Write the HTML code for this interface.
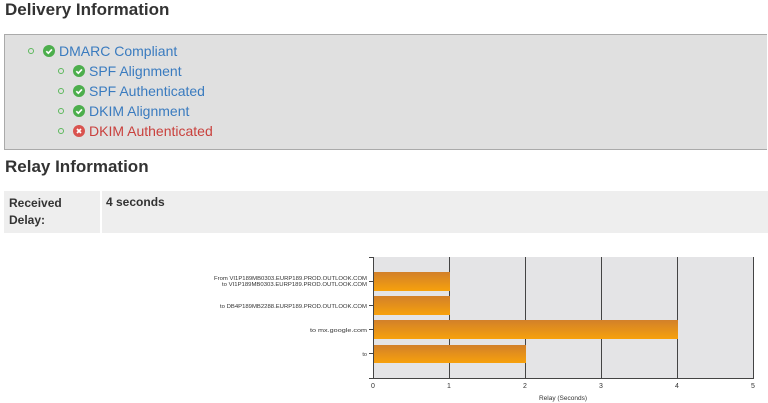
<!DOCTYPE html>
<html><head><style>
body{margin:0;width:768px;height:403px;overflow:hidden;background:#fff;font-family:"Liberation Sans",Arial,sans-serif;position:relative}
h2{position:absolute;left:5px;margin:0;font-size:17px;font-weight:bold;color:#333}
.box{position:absolute;left:4px;top:34px;width:762px;height:114px;background:#e0e0e0;border:1px solid #aaa;border-right:none}
.it{position:absolute;font-size:14px;color:#3a7bbf;height:20px;line-height:20px}
.it .b{position:absolute;left:-15px;top:7px;width:4px;height:4px;border:1px solid #5cb85c;border-radius:50%}
.ic{display:inline-block;width:12px;height:12px;border-radius:50%;background:#4cae4c;vertical-align:-1px;margin-right:4px;position:relative}
.ic.r{background:#d9534f}
.tbl{position:absolute;left:4px;top:191px;width:764px;height:42px;background:#eee;font-size:12px;font-weight:bold;color:#333}
</style></head><body>
<h2 style="top:0">Delivery Information</h2>
<div class="box"></div>
<div class="it" style="left:43px;top:41px"><span class="b"></span><span class="ic"><svg width="12" height="12" style="position:absolute;left:0;top:0"><path d="M3.3 6.2l2 2 3.6-3.8" stroke="#fff" stroke-width="1.7" fill="none"/></svg></span>DMARC Compliant</div>
<div class="it" style="left:73px;top:61px"><span class="b"></span><span class="ic"><svg width="12" height="12" style="position:absolute;left:0;top:0"><path d="M3.3 6.2l2 2 3.6-3.8" stroke="#fff" stroke-width="1.7" fill="none"/></svg></span>SPF Alignment</div>
<div class="it" style="left:73px;top:81px"><span class="b"></span><span class="ic"><svg width="12" height="12" style="position:absolute;left:0;top:0"><path d="M3.3 6.2l2 2 3.6-3.8" stroke="#fff" stroke-width="1.7" fill="none"/></svg></span>SPF Authenticated</div>
<div class="it" style="left:73px;top:101px"><span class="b"></span><span class="ic"><svg width="12" height="12" style="position:absolute;left:0;top:0"><path d="M3.3 6.2l2 2 3.6-3.8" stroke="#fff" stroke-width="1.7" fill="none"/></svg></span>DKIM Alignment</div>
<div class="it" style="left:73px;top:121px;color:#c9413d"><span class="b"></span><span class="ic r"><svg width="12" height="12" style="position:absolute;left:0;top:0"><path d="M4 4l4 4M8 4l-4 4" stroke="#fff" stroke-width="1.7"/></svg></span>DKIM Authenticated</div>
<h2 style="top:157px">Relay Information</h2>
<div class="tbl">
<div style="position:absolute;left:0;top:0;width:96px;height:42px;border-right:2px solid #fff"></div>
<div style="position:absolute;left:5px;top:4px;line-height:17px">Received<br>Delay:</div>
<div style="position:absolute;left:102px;top:4px">4 seconds</div>
</div>
<svg style="position:absolute;left:0;top:0" width="768" height="403">
<defs><linearGradient id="g" x1="0" y1="0" x2="0" y2="1"><stop offset="0" stop-color="#d2802a"/><stop offset="1" stop-color="#f7a10c"/></linearGradient></defs>
<rect x="373" y="257" width="380" height="121" fill="#e4e4e6"/>
<g stroke="#444" stroke-width="1">
<line x1="449.5" y1="257" x2="449.5" y2="378"/><line x1="525.5" y1="257" x2="525.5" y2="378"/><line x1="601.5" y1="257" x2="601.5" y2="378"/><line x1="677.5" y1="257" x2="677.5" y2="378"/><line x1="753.5" y1="257" x2="753.5" y2="378"/>
<line x1="373.5" y1="257" x2="373.5" y2="379"/><line x1="373" y1="378.5" x2="754" y2="378.5"/>
<line x1="369" y1="257.5" x2="373" y2="257.5"/><line x1="369" y1="281.5" x2="373" y2="281.5"/><line x1="369" y1="305.5" x2="373" y2="305.5"/><line x1="369" y1="329.5" x2="373" y2="329.5"/><line x1="369" y1="353.5" x2="373" y2="353.5"/><line x1="369" y1="378.5" x2="373" y2="378.5"/>
</g>
<rect x="374" y="272" width="76" height="19" fill="url(#g)"/>
<rect x="374" y="296" width="76" height="19" fill="url(#g)"/>
<rect x="374" y="320" width="304" height="19" fill="url(#g)"/>
<rect x="374" y="345" width="152" height="18" fill="url(#g)"/>
<g font-size="5.5" fill="#333" text-anchor="end" font-family="Liberation Sans,sans-serif">
<text x="367" y="280" textLength="153" lengthAdjust="spacingAndGlyphs">From VI1P189MB0303.EURP189.PROD.OUTLOOK.COM</text>
<text x="367" y="286" textLength="145" lengthAdjust="spacingAndGlyphs">to VI1P189MB0303.EURP189.PROD.OUTLOOK.COM</text>
<text x="367" y="308" textLength="147" lengthAdjust="spacingAndGlyphs">to DB4P189MB2288.EURP189.PROD.OUTLOOK.COM</text>
<text x="367" y="332" textLength="57" lengthAdjust="spacingAndGlyphs">to mx.google.com</text>
<text x="367" y="356">to</text>
</g>
<g font-size="7" fill="#333" text-anchor="middle" font-family="Liberation Sans,sans-serif">
<text x="373" y="388">0</text><text x="449" y="388">1</text><text x="525" y="388">2</text><text x="601" y="388">3</text><text x="677" y="388">4</text><text x="753" y="388">5</text>
<text x="563" y="400" font-size="6.5">Relay (Seconds)</text>
</g>
</svg>
</body></html>
